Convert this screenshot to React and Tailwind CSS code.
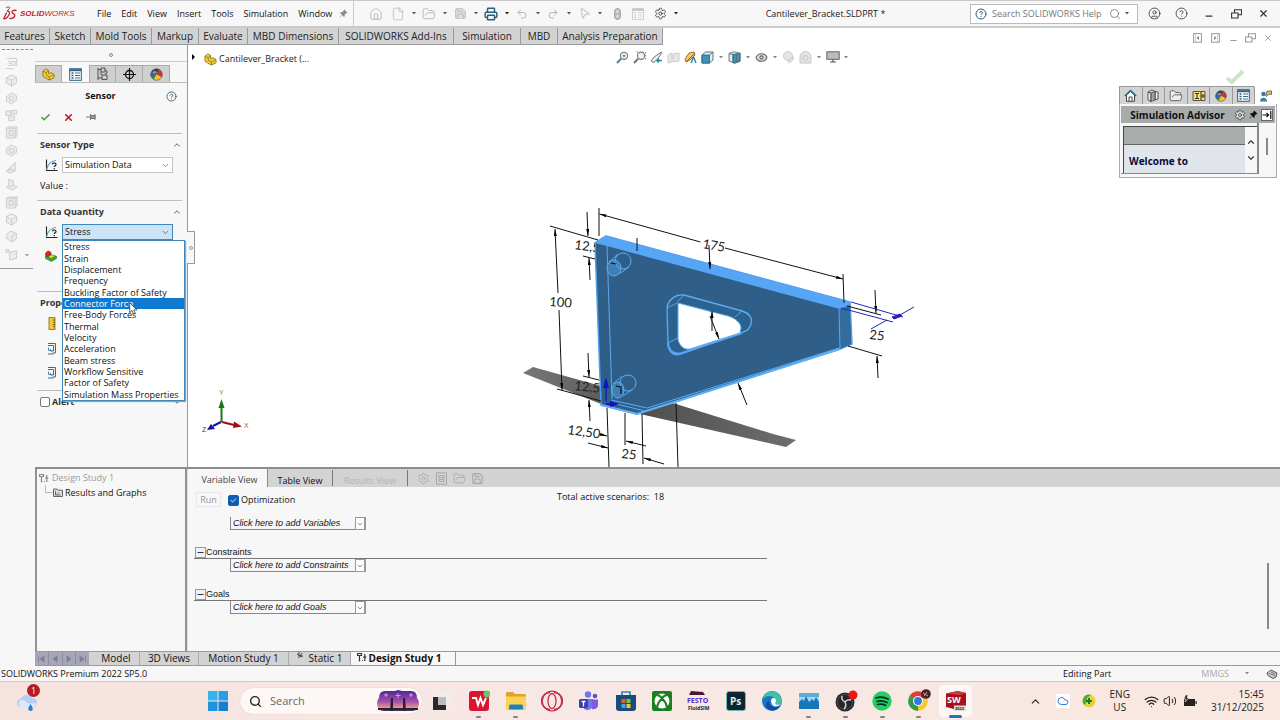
import React, { useState } from "react";
import {
  Check,
  ChevronDown,
  ChevronUp,
  CircleHelp,
  CircleUser,
  Cloud,
  Eye,
  File,
  FolderOpen,
  House,
  Minus,
  MousePointer2,
  Printer,
  Redo2,
  Save,
  Search,
  Settings,
  Undo2,
  Volume2,
  Wifi,
  X,
} from "lucide-react";

const menus = ["File", "Edit", "View", "Insert", "Tools", "Simulation", "Window"];

const ribbonTabs = [
  { label: "Features", width: "w-[50px]" },
  { label: "Sketch", width: "w-[41px]" },
  { label: "Mold Tools", width: "w-[61px]" },
  { label: "Markup", width: "w-[47px]" },
  { label: "Evaluate", width: "w-[49px]" },
  { label: "MBD Dimensions", width: "w-[91px]" },
  { label: "SOLIDWORKS Add-Ins", width: "w-[115px]" },
  { label: "Simulation", width: "w-[67px]" },
  { label: "MBD", width: "w-[37px]" },
  { label: "Analysis Preparation", width: "w-[105px]" },
];

const quantities = [
  "Stress",
  "Strain",
  "Displacement",
  "Frequency",
  "Buckling Factor of Safety",
  "Connector Force",
  "Free-Body Forces",
  "Thermal",
  "Velocity",
  "Acceleration",
  "Beam stress",
  "Workflow Sensitive",
  "Factor of Safety",
  "Simulation Mass Properties",
];

function Caret({ className = "w-[15px]", color = "#555" }) {
  return (
    <span className={`flex justify-center shrink-0 ${className}`}>
      <svg width="4" height="3" viewBox="0 0 4 3">
        <path d="M0 0h4L2 2.6z" fill={color} />
      </svg>
    </span>
  );
}

/* ---------- small drawings ---------- */

function PartIcon({ size = 13 }) {
  return (
    <svg width={size} height={size} viewBox="0 0 14 14">
      <path d="M1 3.5 4 1l3 1.5V6l3-1 3 2v3.5L8 13 1 9z" fill="#f3cf3c" stroke="#8a6d12" strokeWidth=".9" strokeLinejoin="round" />
      <path d="M1 3.5 4.5 5v3L8 9.5V13M4.5 5 7 3M8 9.5 13 7" fill="none" stroke="#8a6d12" strokeWidth=".8" />
    </svg>
  );
}

function ListIcon({ color = "#2a5f7e", size = 13 }) {
  return (
    <svg width={size} height={size} viewBox="0 0 13 13">
      <rect x=".7" y=".7" width="11.6" height="11.6" fill="#fff" stroke={color} />
      <path d="M.7 2.2h11.6" stroke={color} strokeWidth="2" />
      <path d="M2.5 5h2M2.5 7.5h2M2.5 10h2" stroke={color} strokeWidth="1.5" />
      <path d="M6 5h5M6 7.5h5M6 10h5" stroke={color} strokeWidth=".9" />
    </svg>
  );
}

function ConfigIcon() {
  return (
    <svg width="13" height="14" viewBox="0 0 13 14" fill="none" stroke="#444" strokeWidth=".9">
      <path d="M2 1v12M2 2.5h3M2 11h4M5 1h4v4H5zM6 8h5v4.5H6zM9 2.5l2 1.5v2L9 7M5 5v3" />
    </svg>
  );
}

function TargetIcon() {
  return (
    <svg width="13" height="13" viewBox="0 0 13 13" fill="none" stroke="#111">
      <circle cx="6.5" cy="6.5" r="4" strokeWidth="1.3" />
      <path d="M6.5 0v13M0 6.5h13" strokeWidth="1.1" />
    </svg>
  );
}

function BallIcon({ size = 14 }) {
  return (
    <svg width={size} height={size} viewBox="0 0 14 14">
      <path d="M7 7 1.5 4A6.3 6.3 0 0 1 10 1.5z" fill="#333a44" />
      <path d="M7 7 10 1.5A6.3 6.3 0 0 1 12.5 10z" fill="#d52c2c" />
      <path d="M7 7l5.5 3A6.3 6.3 0 0 1 4 12.5z" fill="#efc52a" />
      <path d="M7 7 4 12.5A6.3 6.3 0 0 1 1.5 4z" fill="#2f8b4a" />
      <path d="M7 7 1.5 4A6.3 6.3 0 0 0 1 9z" fill="#2b62c4" />
      <circle cx="7" cy="7" r="6.2" fill="none" stroke="#555" strokeWidth=".7" />
      <ellipse cx="5.2" cy="4.5" rx="2.2" ry="1.4" fill="#fff" opacity=".45" />
    </svg>
  );
}

function SensorIcon() {
  return (
    <svg width="13" height="13" viewBox="0 0 13 13" fill="none">
      <path d="M1.5.5v11h11" stroke="#222" strokeWidth="1.1" />
      <path d="M1.5 11C2.5 5 6 2 11 1.5" stroke="#4fa3c7" strokeWidth="1.1" />
      <path d="M7.5 5.4C7.6 3.4 11 3.6 11 5.4c0 1.3-1.7 1.3-1.7 2.6M9.3 9v1.2" stroke="#222" strokeWidth="1.2" />
    </svg>
  );
}

function StressIcon() {
  return (
    <svg width="12" height="12" viewBox="0 0 12 12">
      <path d="M.5 3 3 .8l3 1.400L6 6 3.600 8 .5 6.500z" fill="#d9261c" stroke="#7a1a12" strokeWidth=".4" />
      <path d="M3.600 6.500 6 4.500l5.500 1.700v2.300l-5 3L.5 8.500v-2z" fill="#35a83c" stroke="#1b5a20" strokeWidth=".5" />
      <path d="M3.600 6.600 7 5l2.500 1L6.200 8z" fill="#f4d429" />
    </svg>
  );
}

function RulerIcon() {
  return (
    <svg width="8" height="13" viewBox="0 0 8 13">
      <rect x="1" y=".6" width="6" height="11.8" fill="#f2cb36" stroke="#94741a" strokeWidth=".9" />
      <path d="M7 3H4.5M7 5.2H5M7 7.4H4.5M7 9.6H5" stroke="#5d480d" strokeWidth=".8" />
    </svg>
  );
}

function ScopeIcon() {
  return (
    <svg width="10" height="13" viewBox="0 0 10 13" fill="none" stroke="#56616b" strokeWidth="1">
      <path d="M1 1.500h7.500v9.500H5.500M1 12h5.500M1 3.500h5.500V9H3.500" />
      <path d="M1.500 5.500v3h3M3 7l1.500 1.500" stroke="#3b8db5" />
    </svg>
  );
}

function PushPin({ color = "#888" }) {
  return (
    <svg width="9" height="9" viewBox="0 0 9 9">
      <path d="M5.2.5 8.5 3.8l-1 .5-.4-.1L5.6 5.7l.1 1.6-.8.7L3 6 .8 8.4l-.3-.3L2.9 5.8.9 3.9l.7-.7 1.6.1L4.7 1.8l-.1-.5z" fill={color} />
    </svg>
  );
}

function FaintSolid({ kind }) {
  return (
    <svg width="13" height="13" viewBox="0 0 14 14" fill="#ebebeb" stroke="#cacaca" strokeWidth="1" strokeLinejoin="round">
      {kind === "3d" && (
        <>
          <path d="M2 1.5h10.5v8M1 12.5h8" fill="none" />
          <text x="3" y="10" fontSize="7" fill="#b9b9b9" stroke="none">3D</text>
        </>
      )}
      {kind === "cube" && <path d="M7 1l5.5 2.5v6L7 13l-5.5-3v-6zM1.5 4 7 6.5 12.5 3.5M7 6.5V13" />}
      {kind === "round" && <path d="M1.5 5 7 1l5.5 3v5L7 13 1.5 10zM4.5 5.5c2-2 5 0 5 2s-3 3-4.5 1.5z" />}
      {kind === "stack" && <path d="M1 2h5v5H1zM7.5 1.5h5v4h-5zM4 7.5h6v5H4z" />}
      {kind === "wedge" && <path d="M1.5 11 11 1.5v9L5 13zM1.5 11l4-2 5.5 1.5M5.5 9V7" />}
      {kind === "base" && <path d="M4 1.5 9 3v5l4 1.5L8.5 13 1.5 10 4 8.5zM9 8 4.5 9" />}
      {kind === "shell" && <path d="M1.5 2.5 4 1h9v9.5L10.5 13h-9zM4.5 5h4v5h-4zM1.5 2.5H11V13" />}
      {kind === "fillet" && <path d="M1.5 9c0-5 2-7.5 6-7.5L12.5 4v5.5L7.5 13zM7.5 13V7.5C8 5.5 10 4 12.5 4" />}
      {kind === "plane" && <path d="M5 4.5 12.5 3v8L5 13zM1 1.5h3v3H1z" />}
    </svg>
  );
}

const stripTools = ["3d", "cube", "round", "stack", "shell", "round", "wedge", "base", "shell", "cube", "fillet", "plane"];

/* ---------- title bar ---------- */

function TitleBar() {
  const tool = "flex w-4 h-5 shrink-0 items-center justify-center";
  return (
    <header className="flex h-7 shrink-0 items-center border-t border-b-2 border-t-[#c9c9c9] border-b-[#cacaca] bg-[#f7f7f7]">
      <div className="flex w-[92px] shrink-0 items-center gap-[3px] pl-[3px] text-[#c8202f]">
        <svg width="14" height="15" viewBox="0 0 14 15" fill="none" stroke="#c8202f" strokeLinecap="round">
          <path d="M3.5 1.5c2-1 4-.5 3 1L4.5 4.5" strokeWidth="1" />
          <path d="M4.5 5C7.5 5.5 7 8.5 4.5 11 3 12.5 1.5 13 .8 12.5L3.5 7" strokeWidth="1.3" />
          <path d="M13 4.5C11.5 3.8 9 4.5 9 6c0 1.8 3.3 1.5 2.8 3.800C11.3 12 8.5 13 6.8 12.3" strokeWidth="1.4" />
        </svg>
        <span className="font-['Liberation_Sans'] text-[8px] leading-4 italic">
          <b>SOLID</b>WORKS
        </span>
      </div>
      <nav className="flex w-[242px] shrink-0 justify-between text-[9px] leading-4">
        {menus.map((m) => (
          <button key={m} className="px-[5px]">{m}</button>
        ))}
      </nav>
      <div className="flex h-full w-[20px] shrink-0 items-center justify-center border-r border-[#ccc]">
        <PushPin />
      </div>
      <div className="ml-[11px] flex shrink-0 items-center text-[#b5b5b5]">
        <button aria-label="Home" className="flex w-[22px] justify-center"><House size={14} strokeWidth={1.5} /></button>
        <span className="w-[3px]" />
        <button aria-label="New" className={tool}><File size={14} strokeWidth={1.3} /></button>
        <Caret />
        <button aria-label="Open" className={tool}><FolderOpen size={14} strokeWidth={1.5} /></button>
        <Caret />
        <button aria-label="Save" className={tool}><Save size={13} strokeWidth={1.5} fill="#ddd" /></button>
        <Caret />
        <button aria-label="Print" className={`${tool} text-[#27607f]`}><Printer size={14} strokeWidth={2.5} /></button>
        <Caret color="#222" />
        <button aria-label="Undo" className={tool}><Undo2 size={12} strokeWidth={2} /></button>
        <Caret />
        <button aria-label="Redo" className={tool}><Redo2 size={12} strokeWidth={2} /></button>
        <Caret />
        <button aria-label="Select" className={tool}><MousePointer2 size={13} strokeWidth={1.5} className="rotate-[12deg]" /></button>
        <Caret />
        <button aria-label="Rebuild" className="flex w-5 justify-center">
          <svg width="7" height="12" viewBox="0 0 7 12">
            <rect x=".5" y=".5" width="6" height="11" rx="3" fill="#b9b9b9" stroke="#a5a5a5" />
            <circle cx="3.5" cy="3.5" r="1.5" fill="#ddd" /><circle cx="3.5" cy="8.3" r="1.5" fill="#ddd" />
          </svg>
        </button>
        <button aria-label="Options list" className="flex w-[22px] justify-center"><ListIcon color="#c4c4c4" size={12} /></button>
        <button aria-label="Options" className="flex w-[22px] justify-center text-[#333]"><Settings size={13} strokeWidth={1.5} /></button>
        <Caret className="w-[10px]" color="#222" />
      </div>
      <div className="min-w-0 flex-1 text-center text-[9px] leading-4 text-[#222]">Cantilever_Bracket.SLDPRT *</div>
      <div className="flex h-5 w-[168px] shrink-0 items-center border border-[#bbb] bg-white px-1">
        <CircleHelp size={12} strokeWidth={2} className="text-[#2f5d78]" />
        <input aria-label="Search help" placeholder="Search SOLIDWORKS Help" className="ml-[5px] w-0 flex-1 text-[9px] outline-none placeholder:text-[#777]" />
        <Search size={12} strokeWidth={1.5} className="text-[#666]" />
        <Caret className="w-3" />
      </div>
      <div className="flex shrink-0 items-center pl-[3px] text-[#333]">
        <button aria-label="Account" className="flex w-[27px] justify-center"><CircleUser size={13} strokeWidth={1.5} /></button>
        <button aria-label="Help" className="flex w-[27px] justify-center"><CircleHelp size={13} strokeWidth={1.5} /></button>
        <button aria-label="Minimize" className="flex w-[28px] justify-center pt-1"><Minus size={10} strokeWidth={3} /></button>
        <button aria-label="Restore" className="flex w-[27px] justify-center"><Restore color="#333" /></button>
        <button aria-label="Close" className="flex w-[27px] justify-center"><X size={11} strokeWidth={2.5} /></button>
        <span className="w-[3px]" />
      </div>
    </header>
  );
}

function Restore({ color }) {
  return (
    <svg width="11" height="10" viewBox="0 0 11 10" fill="none" stroke={color} strokeWidth="1.1">
      <path d="M.6 4h6.400v5H.6zM3.5 4V.8h7v5H7" />
    </svg>
  );
}

function DockIcon({ flip }) {
  return (
    <svg width="9" height="10" viewBox="0 0 9 10" className={flip ? "-scale-x-100" : ""}>
      <rect x=".6" y=".6" width="7.8" height="8.6" fill="none" stroke="#999" />
      <path d="M2.5.6v8.6" stroke="#bbb" strokeWidth=".6" />
      <path d="M6 3v4L3.5 5z" fill="#888" />
    </svg>
  );
}

function Ribbon() {
  return (
    <div className="flex h-[17px] shrink-0 bg-white">
      {ribbonTabs.map((t) => (
        <button
          key={t.label}
          className={`${t.width} shrink-0 border-r border-b border-[#9a9a9a] bg-[#d3d3d3] text-center text-[10px] leading-4 whitespace-nowrap text-[#222]`}
        >
          {t.label}
        </button>
      ))}
      <div className="ml-auto flex items-end pr-1 text-[#999]">
        <button aria-label="Dock left" className="flex w-[17px] justify-center pb-[2px]"><DockIcon /></button>
        <button aria-label="Dock right" className="flex w-[18px] justify-center pb-[2px]"><DockIcon flip /></button>
        <button aria-label="Minimize document" className="flex w-[18px] justify-center"><Minus size={9} strokeWidth={3} /></button>
        <button aria-label="Restore document" className="flex w-[17px] justify-center pb-[2px]"><Restore color="#999" /></button>
        <button aria-label="Close document" className="flex w-[17px] justify-center pb-[2px]"><X size={10} strokeWidth={2} /></button>
      </div>
    </div>
  );
}

/* ---------- left side ---------- */

function ToolStrip() {
  return (
    <div className="w-[35px] shrink-0 pt-1">
      <div className="ml-[2px] w-[31px] border-t border-dashed border-[#888]" />
      <div className="mt-[5px] grid h-[208px] w-[22px] auto-rows-fr place-items-center">
        {stripTools.map((kind, i) => (
          <button key={i} aria-label={`Feature tool ${i + 1}`} className="relative">
            <FaintSolid kind={kind} />
            {kind === "plane" && (
              <span className="absolute top-1.5 left-4"><Caret className="w-3" color="#999" /></span>
            )}
          </button>
        ))}
      </div>
      <div className="mt-[5px] w-[33px] border-t border-[#999]" />
    </div>
  );
}

function GroupHeader({ children }) {
  return (
    <div className="ml-[2px] flex h-[23px] items-center justify-between border-t border-[#bdbdbd] pl-[3px]">
      <h2 className="text-[9px] leading-4 font-bold text-[#333]">{children}</h2>
      <ChevronUp size={10} strokeWidth={2} className="text-[#444]" />
    </div>
  );
}

function PropertyPanel() {
  const [quantity, setQuantity] = useState("Stress");
  const [alert, setAlert] = useState(false);
  const tab = "flex h-[17px] w-[27px] items-center justify-center border border-b-0 border-[#aaa]";

  return (
    <section className="relative flex w-[153px] shrink-0 flex-col border-r border-[#999] bg-[#f7f7f7]">
      <div className="flex h-[17px] items-center justify-center border-b border-[#ccc] pt-1">
        <span className="size-1 rounded-full border border-[#888]" />
      </div>
      <div className="mt-[3px] flex border-b border-[#bbb]">
        <button aria-label="Feature tree" className={`${tab} bg-[#cfcfcf]`}><PartIcon /></button>
        <button aria-label="Property manager" className={`${tab} border-transparent bg-[#f9f9f9]`}><ListIcon /></button>
        <button aria-label="Configurations" className={`${tab} bg-[#cfcfcf]`}><ConfigIcon /></button>
        <button aria-label="DimXpert" className={`${tab} border-l-0 bg-[#cfcfcf]`}><TargetIcon /></button>
        <button aria-label="Appearances" className={`${tab} border-l-0 bg-[#cfcfcf]`}><BallIcon size={13} /></button>
      </div>

      <div className="mt-[5px] flex h-4 items-center pr-2.5">
        <h1 className="flex-1 text-center text-[9px] leading-4 font-bold">Sensor</h1>
        <CircleHelp size={11} strokeWidth={2} className="text-[#3d6478]" />
      </div>
      <div className="mt-[5px] mb-2 flex h-4 items-center gap-3 pl-[5px]">
        <button aria-label="OK"><Check size={11} strokeWidth={3.5} className="text-[#3fa535]" /></button>
        <button aria-label="Cancel"><X size={11} strokeWidth={3.5} className="text-[#b3202a]" /></button>
        <button aria-label="Keep visible">
          <svg width="10" height="8" viewBox="0 0 10 8" fill="none" stroke="#777">
            <path d="M0 4h4M4.500 1v6M9 1v6" />
            <path d="M4.500 2.500h4.500v3H4.500z" fill="#999" />
          </svg>
        </button>
      </div>

      <div className="flex flex-1 flex-col pr-[5px]">
        <GroupHeader>Sensor Type</GroupHeader>
        <div className="flex h-[18px] items-center pl-[10px]">
          <SensorIcon />
          <div className="relative ml-1 w-[111px]">
            <select aria-label="Sensor type" className="block h-4 w-full appearance-none border border-[#c4c4c4] bg-white pl-[2px] text-[9px] leading-3">
              <option>Simulation Data</option>
            </select>
            <ChevronDown size={9} strokeWidth={2} className="pointer-events-none absolute top-1 right-[3px] text-[#666]" />
          </div>
        </div>
        <p className="mt-1 mb-[6px] pl-[5px] text-[9px] leading-4">Value :</p>

        <GroupHeader>Data Quantity</GroupHeader>
        <div className="flex h-[18px] items-center pl-[10px]">
          <SensorIcon />
          <div className="relative ml-1 w-[111px]">
            <select
              aria-label="Data quantity"
              value={quantity}
              onChange={(e) => setQuantity(e.target.value)}
              className="block h-4 w-full appearance-none border border-[#3f87bd] bg-[#cde4f7] pl-[2px] text-[9px] leading-3"
            >
              {quantities.map((q) => (
                <option key={q}>{q}</option>
              ))}
            </select>
            <ChevronDown size={9} strokeWidth={2} className="pointer-events-none absolute top-1 right-[3px] text-[#555]" />
            <ul role="listbox" aria-label="Data quantities" className="absolute top-4 left-0 z-20 flex h-[161px] w-[123px] flex-col border border-[#3f87bd] bg-white shadow-[1px_1px_1px_#8aa]">
              {quantities.map((q) => (
                <li
                  key={q}
                  role="option"
                  aria-selected={q === "Connector Force"}
                  onClick={() => setQuantity(q)}
                  className={`flex flex-1 items-center pl-[1px] text-[9px] leading-[11px] whitespace-nowrap ${
                    q === "Connector Force" ? "bg-[#0f78cf] text-white" : ""
                  }`}
                >
                  {q}
                </li>
              ))}
              <svg width="9" height="13" viewBox="0 0 9 13" className="absolute top-[61px] left-[66px]">
                <path d="M.7.7v10l2.3-2.2 1.6 3.7 1.7-.7-1.6-3.6h3.2z" fill="#fff" stroke="#333" strokeWidth=".8" />
              </svg>
            </ul>
          </div>
        </div>
        <div className="mt-[9px] mb-[29px] pl-[10px]"><StressIcon /></div>

        <GroupHeader>Properties</GroupHeader>
        <div className="flex h-[76px] flex-col items-center justify-between pt-[3px] pr-[115px] pb-[11px] pl-[1px]">
          <RulerIcon />
          <ScopeIcon />
          <ScopeIcon />
        </div>
        <div className="ml-[2px] flex h-[23px] items-center border-t border-[#bdbdbd] pl-[3px]">
          <label className="flex flex-1 items-center gap-[2px] text-[9px] leading-4 font-bold text-[#333]">
            <input
              type="checkbox"
              checked={alert}
              onChange={(e) => setAlert(e.target.checked)}
              className="size-[10px] appearance-none rounded-[2px] border border-[#777] bg-white checked:bg-[#0f5fae]"
            />
            Alert
          </label>
          <ChevronDown size={10} strokeWidth={2} className="text-[#444]" />
        </div>
      </div>

      {/* fly-out handle */}
      <div className="absolute top-[186px] left-[152px] z-10 flex h-[33px] w-2 items-center justify-center border border-l-0 border-[#999] bg-[#f7f7f7]">
        <span className="size-1 rounded-full border border-[#999]" />
      </div>
    </section>
  );
}

/* ---------- graphics area ---------- */

function Bracket() {
  return (
    <svg className="absolute inset-0 h-full w-full" viewBox="188 45 1092 422" preserveAspectRatio="xMinYMin slice">
      <defs>
        <linearGradient id="shadow" x1="0" y1="0" x2="1" y2="0">
          <stop offset="0" stopColor="#777" />
          <stop offset=".45" stopColor="#505050" />
          <stop offset="1" stopColor="#6e6e6e" />
        </linearGradient>
        <marker id="arrow" viewBox="0 0 7 3" refX="7" refY="1.5" markerWidth="7" markerHeight="3" markerUnits="userSpaceOnUse" orient="auto-start-reverse">
          <path d="M0 0l7 1.5L0 3z" />
        </marker>
      </defs>

      <path d="M523 373l10-6 68 19 75 18 97 30 23 6-10 7-146-33-39-10z" fill="url(#shadow)" />

      {/* solid body */}
      <path d="M595 243l11-7 244 66 2 42-12 5-203 65-36-9z" fill="#2f5f89" stroke="#4d9eea" strokeWidth="1.5" strokeLinejoin="round" />
      <path d="M595 243l11-7 244 66-1 5-9 2-233-63z" fill="#57a5f5" />
      <path d="M840 309l10-4 1 39-11 5z" fill="#336d9f" />
      <path d="M607 246l5 153M839 309l1 39M611 400l36 8 192-60M612 403l33 8" fill="none" stroke="#5dabf0" strokeWidth="1" />
      <path d="M601 405l36 9 203-65" fill="none" stroke="#5fb0f7" strokeWidth="2" />

      {/* triangular cut-out */}
      <path d="M667 308c1-8 8-14 17-13l58 16c7 2 11 7 9 13-1 4-4 7-8 8l-62 22c-8 3-13-3-13-10z" fill="#2c628f" stroke="#5dabf0" strokeWidth="1.3" />
      <path d="M668 343c1 9 7 12 14 10l60-20" fill="none" stroke="#57a5f5" strokeWidth="2" />
      <path d="M678 303l50 13c7 2 13 7 13 12l-1 5-50 16c-7 1-11-4-12-10z" fill="#fff" stroke="#5dabf0" strokeWidth="1" />
      <path d="M667 308l10-5M684 295l-7 7M735 317l7-6M668 343l10-5" stroke="#5dabf0" strokeWidth=".9" />

      {/* bolt holes */}
      <g fill="none" stroke="#5dabf0" strokeWidth="1">
        <ellipse cx="614" cy="268" rx="7" ry="8" fill="#3f7fb5" />
        <ellipse cx="623" cy="261" rx="8" ry="8" />
        <path d="M609 262l9-8M619 274l10-7" />
        <ellipse cx="618" cy="390" rx="6" ry="8" fill="#3f7fb5" />
        <ellipse cx="628" cy="383" rx="8" ry="8" />
        <path d="M613 384l9-8M623 396l10-7" />
      </g>
      <path d="M611 263l5 1M616 386l5 1v7" stroke="#111" strokeWidth="1.2" fill="none" />

      {/* dimensions */}
      <g fill="none" stroke="#111" strokeWidth="1">
        <path d="M599 208v28M843 274l1 29M550 226l48 14" />
        <path d="M599.500 214l101 28" markerStart="url(#arrow)" />
        <path d="M725 248l118 31" markerEnd="url(#arrow)" />
        <path d="M555 229l3 64" markerStart="url(#arrow)" />
        <path d="M559 310l3 80" markerEnd="url(#arrow)" />
        <path d="M557 389l44 12" />
        <path d="M587 212l1 24" markerEnd="url(#arrow)" />
        <path d="M590 280l-1-22" markerEnd="url(#arrow)" />
        <path d="M583 256l12 3M583 376l16 4" />
        <path d="M588 353l1 24" markerEnd="url(#arrow)" />
        <path d="M590 421l-1-21" markerEnd="url(#arrow)" />
        <path d="M637 238v13" />
        <path d="M709 245l1 24" markerEnd="url(#arrow)" />
        <path d="M712 311v20" markerStart="url(#arrow)" />
        <path d="M710 316l9 23" markerEnd="url(#arrow)" />
        <path d="M747 405l-9-22" markerEnd="url(#arrow)" />
        <path d="M607 408l2 59M625 413v32M642 414l1 50M676 403l2 64" />
        <path d="M599 434l8 2" markerEnd="url(#arrow)" />
        <path d="M588 443l20 5" markerEnd="url(#arrow)" />
        <path d="M646 446l-20-5" markerEnd="url(#arrow)" />
        <path d="M664 464l-20-6" markerEnd="url(#arrow)" />
        <path d="M875 290l1 23" markerEnd="url(#arrow)" />
        <path d="M878 378l-1-22" markerEnd="url(#arrow)" />
        <path d="M847 306l34 9M848 346l34 10" />
      </g>
      <g fill="none" stroke="#2a22b8" strokeWidth="1">
        <path d="M851 302l52 15M841 308l52 14M914 307l-16 9M871 329l16-9" />
        <path d="M892 317l8-3 2 2-8 3z" fill="#2a22b8" />
        <path d="M606 401v-18M606 404h11" stroke="#1010c8" strokeWidth="1.3" />
      </g>
      <path d="M603 388l3-11 3 11zM610 401l9 3-9 3z" fill="#1010c8" />
      <g className="font-['Lato',sans-serif] text-[13px]" fill="#222">
        <text x="549" y="306" transform="rotate(4 549 306)">100</text>
        <text x="702" y="248" transform="rotate(10 702 248)">175</text>
        <svg x="570" y="235" width="25" height="30" viewBox="570 235 25 30">
          <text x="574" y="249" transform="rotate(8 574 249)">12,50</text>
        </svg>
        <svg x="570" y="374" width="30" height="30" viewBox="570 374 30 30">
          <text x="574" y="390" transform="rotate(6 574 390)">12,50</text>
        </svg>
        <text x="567" y="434" transform="rotate(8 567 434)">12,50</text>
        <text x="621" y="458" transform="rotate(6 621 458)">25</text>
        <text x="869" y="339" transform="rotate(6 869 339)">25</text>
      </g>

      {/* orientation triad */}
      <path d="M221.500 422v-15" stroke="#157a15" strokeWidth="2" />
      <path d="M218.500 408l3-9 3 9z" fill="#157a15" />
      <path d="M222 422l12 3" stroke="#a01010" strokeWidth="2" />
      <path d="M234 421.500l8 5-9 1.500z" fill="#a01010" />
      <path d="M221 422l-8 4" stroke="#12129c" strokeWidth="2" />
      <path d="M207 430l4-6 4 5z" fill="#12129c" />
      <g className="font-['Liberation_Sans',sans-serif] text-[7px]">
        <text x="219" y="395" fill="#5aa05a">Y</text>
        <text x="244" y="428" fill="#c05050">X</text>
        <text x="202" y="432" fill="#3030b0">Z</text>
      </g>
    </svg>
  );
}

function ViewTool({ label, children }) {
  return (
    <button aria-label={label} className="flex w-[17px] justify-center">
      {children}
    </button>
  );
}

function Lens({ area }) {
  return (
    <svg width="13" height="13" viewBox="0 0 13 13" fill="none">
      {area && <path d="M3.5 1h9v9" stroke="#888" strokeDasharray="1.5 1.5" />}
      <circle cx="8" cy="4.8" r="3.6" fill="#f2f2f2" stroke="#777" strokeWidth="1.1" />
      <path d="M5 7.8 1 12" stroke="#5a7f95" strokeWidth="2" />
      {!area && <path d="M6.5 4.8h3M8 3.3v3" stroke="#777" />}
    </svg>
  );
}

function CubeIcon({ section }) {
  if (section) {
    return (
      <svg width="13" height="13" viewBox="0 0 13 13" strokeWidth=".9" strokeLinejoin="round">
        <path d="M1 2.500 6 .8l6 1.400v8L7 12.300 1 10z" fill="#e3eaee" stroke="#5b6d78" />
        <path d="M5 3.500l7-1.300v8L5 12z" fill="#3d93b8" stroke="#2f6680" />
        <path d="M1 2.500 5 3.500V12M8.500 3v8.500" fill="none" stroke="#5b6d78" />
      </svg>
    );
  }
  return (
    <svg width="13" height="13" viewBox="0 0 13 13" strokeWidth=".9" strokeLinejoin="round">
      <path d="M1 4l3.500-3H12v8l-3.500 3H1z" fill="#e8eef1" stroke="#48606e" />
      <path d="M1 4h7.500v8H1z" fill="#3d93b8" stroke="#2f6680" />
      <path d="M8.500 4 12 1" stroke="#48606e" />
    </svg>
  );
}

function HeadsUpBar() {
  const caret = <Caret className="w-[10px]" color="#888" />;
  return (
    <div className="flex h-4 items-center">
      <ViewTool label="Zoom to fit"><Lens /></ViewTool>
      <ViewTool label="Zoom to area"><Lens area /></ViewTool>
      <ViewTool label="Previous view">
        <svg width="13" height="13" viewBox="0 0 13 13" fill="none">
          <path d="M11.5 1 4 6l-3 4 2 1.5L7 9l4-6z" fill="#eee" stroke="#777" />
          <path d="M12 9.5H7M8.8 7.5 6.8 9.5l2 2" stroke="#2c83a8" strokeWidth="1.4" />
        </svg>
      </ViewTool>
      <ViewTool label="Section view">
        <svg width="13" height="13" viewBox="0 0 13 13" fill="#e7e7e7" stroke="#ccc">
          <path d="M1 4l4-2v9l-4 1zM6 3l6-1v8l-6 1z" />
        </svg>
      </ViewTool>
      <ViewTool label="Dynamic annotation">
        <svg width="13" height="13" viewBox="0 0 13 13" fill="none">
          <path d="M1 8 5 2l5-1 1 3-5 5-4 2z" fill="#f2c765" stroke="#8d6a33" strokeWidth=".9" />
          <path d="M2 11 11 2" stroke="#666" />
          <path d="M7 12l2.5-6L12 12" stroke="#2c83a8" strokeWidth="1.4" />
        </svg>
      </ViewTool>
      <ViewTool label="View orientation"><CubeIcon /></ViewTool>
      {caret}
      <ViewTool label="Display style"><CubeIcon section /></ViewTool>
      {caret}
      <ViewTool label="Hide/show items"><Eye size={13} strokeWidth={2} className="text-[#666]" fill="#ddd" /></ViewTool>
      {caret}
      <ViewTool label="Edit appearance">
        <svg width="13" height="13" viewBox="0 0 13 13" fill="#e5e5e5" stroke="#ccc">
          <circle cx="6" cy="5" r="4.5" /><path d="M6 12l2-4 4-2-2 4z" />
        </svg>
      </ViewTool>
      <ViewTool label="Apply scene">
        <svg width="13" height="13" viewBox="0 0 13 13" fill="#e3e3e3" stroke="#c8c8c8">
          <path d="M1 12V6a5.5 5.5 0 0 1 11 0v6z" /><circle cx="6.5" cy="7" r="2.5" />
        </svg>
      </ViewTool>
      {caret}
      <ViewTool label="View settings">
        <svg width="14" height="12" viewBox="0 0 14 12">
          <rect x=".8" y=".8" width="12.4" height="7.5" fill="#bbb" stroke="#666" />
          <path d="M7 8.5v2M4 11h6" stroke="#555" strokeWidth="1.2" />
        </svg>
      </ViewTool>
      {caret}
    </div>
  );
}

function TaskPane() {
  const tab = "flex h-[18px] flex-1 items-center justify-center border-t border-l border-[#999]";
  return (
    <aside className="mt-[25px] mr-[3px] w-[158px] shrink-0">
      <div className="flex h-4 justify-end pr-[32px]">
        <svg width="20" height="16" viewBox="0 0 20 16">
          <path d="M2 8l5 4L18 1" fill="none" stroke="#cbe6c6" strokeWidth="4" />
        </svg>
      </div>
      <div className="flex">
        <button aria-label="Resources" className={`${tab} bg-[#d3d3d3]`}>
          <svg width="13" height="13" viewBox="0 0 13 13">
            <path d="M2.5 6v6.3h8V6L6.5 2.5z" fill="#fff" stroke="#444" />
            <path d="M.8 7 6.5 1.5 12.2 7" fill="none" stroke="#2b6e8c" strokeWidth="1.5" />
            <path d="M5 12V8h3v4" fill="none" stroke="#444" />
          </svg>
        </button>
        <button aria-label="Design library" className={`${tab} bg-[#d3d3d3]`}>
          <svg width="12" height="13" viewBox="0 0 12 13" fill="#eee" stroke="#444" strokeWidth=".9">
            <path d="M1 3l3 1v8.5L1 11zM4 4l4-1.5v8.5L4 12.5zM8 2.5 11 3v7L8 11zM1 3l4-2 3 1.5M6 3.5V11" />
          </svg>
        </button>
        <button aria-label="File explorer" className={`${tab} bg-[#d3d3d3] text-[#555]`}><FolderOpen size={14} strokeWidth={1.5} fill="#eee" /></button>
        <button aria-label="View palette" className={`${tab} bg-[#d3d3d3]`}>
          <svg width="14" height="12" viewBox="0 0 14 12">
            <path d="M1 1.5h12v9H1z" fill="#f1dc77" stroke="#555" />
            <path d="M3 3.5h4M5 3.5v5M3 8.5h4M9 2v8M9 6h4M11 4v4" fill="none" stroke="#3d3d2a" strokeWidth="1.1" />
          </svg>
        </button>
        <button aria-label="Appearances and scenes" className={`${tab} bg-[#d3d3d3]`}><BallIcon size={12} /></button>
        <button aria-label="Custom properties" className={`${tab} bg-[#d3d3d3]`}><ListIcon /></button>
        <button aria-label="Simulation advisor" className={`${tab} border-t-transparent bg-white`}>
          <svg width="14" height="13" viewBox="0 0 14 13">
            <circle cx="4.5" cy="5" r="2.3" fill="#3a7d9e" />
            <path d="M1 12.5c0-5 7-5 7 0z" fill="#3a7d9e" />
            <path d="M8 2h4.5v3.5L10 5 7.5 7.5 7 6.5z" fill="#e8c54a" stroke="#555" strokeWidth=".8" />
          </svg>
        </button>
      </div>
      <div className="border border-t-0 border-[#aaa] bg-[#f7f7f7] p-[1px] pt-[2px]">
        <div className="flex h-[17px] items-center bg-[#a8abab] pr-[2px]">
          <h2 className="flex-1 text-center text-[10px] leading-4 font-bold whitespace-nowrap">Simulation Advisor</h2>
          <button aria-label="Pane options"><Settings size={12} strokeWidth={1.5} fill="#ddd" className="text-[#333]" /></button>
          <button aria-label="Pin pane" className="mx-[3px]"><PushPin color="#111" /></button>
          <button aria-label="Collapse pane" className="flex size-3 items-center border border-[#666] bg-white">
            <svg width="10" height="10" viewBox="0 0 10 10" fill="none" stroke="#111" strokeWidth="1.2">
              <path d="M.5 5h6M4.5 3l2 2-2 2M8.8 1v8" />
            </svg>
          </button>
        </div>
        <div className="flex h-[53px] pb-[2px]">
          <div className="flex flex-1 border-r-2 border-b border-[#888] pt-[3px] pl-[2px]">
            <div className="flex flex-1 flex-col border-t border-l border-[#444]">
              <div className="h-[18px] border-b border-[#666] bg-[#a8adac]" />
              <div className="flex flex-1 items-center bg-[#e0e5eb] pt-1 pl-[5px]">
                <span className="text-[10px] leading-4 font-bold text-[#0b0b3a]">Welcome to</span>
              </div>
            </div>
            <div className="flex w-3 flex-col items-center justify-center gap-[6px] border-t border-[#444] text-[#444]">
              <ChevronUp size={10} strokeWidth={3} />
              <ChevronDown size={10} strokeWidth={3} />
            </div>
          </div>
          <div className="flex w-4 items-center justify-center">
            <span className="mb-1 h-[17px] w-[2px] bg-[#888]" />
          </div>
        </div>
      </div>
    </aside>
  );
}

function Viewport() {
  return (
    <main className="relative flex min-w-0 flex-1 items-start overflow-hidden bg-white">
      <Bracket />
      <div className="relative mt-1.5 flex w-[426px] shrink-0 items-center pl-1">
        <svg width="4" height="6" viewBox="0 0 4 6" className="mb-1"><path d="M0 0l3 3-3 3z" /></svg>
        <button className="ml-2 flex items-center gap-[2px] text-[9px] leading-4 text-[#222]">
          <PartIcon />
          Cantilever_Bracket (...
        </button>
      </div>
      <div className="relative mt-1"><HeadsUpBar /></div>
      <div className="relative ml-auto"><TaskPane /></div>
    </main>
  );
}

/* ---------- design study ---------- */

function StudyIcon({ color = "#555" }) {
  return (
    <svg width="10" height="10" viewBox="0 0 10 10" fill="none" stroke={color} strokeWidth="1.2">
      <path d="M.5 1.5h4v2h-4zM2.500 3.500v6M6 5h3.500M7.800 2v7M5 8.500h1" />
    </svg>
  );
}

function AddRow({ label }) {
  return (
    <div className="relative ml-[36px] h-[13px] w-[136px]">
      <select aria-label={label} className="block h-full w-full appearance-none border-b border-l border-[#888] pl-[2px] font-['Liberation_Sans',sans-serif] text-[9px] leading-3 italic">
        <option>{label}</option>
      </select>
      <span className="pointer-events-none absolute inset-y-0 right-0 flex w-[11px] items-center justify-center border border-r-2 border-[#999] bg-white">
        <ChevronDown size={8} strokeWidth={2} className="text-[#555]" />
      </span>
    </div>
  );
}

function StudySection({ title }) {
  return (
    <div className="flex h-[12px] w-[573px] items-center border-b border-[#777] pl-[1px] font-['Liberation_Sans',sans-serif] text-[9px] leading-[11px]">
      <button aria-label={`Collapse ${title}`} className="flex size-[11px] items-center justify-center border border-[#999] bg-[#f2f2f2] text-[#335]">
        <Minus size={9} strokeWidth={3} />
      </button>
      {title}
    </div>
  );
}

function DesignStudy() {
  const [optimize, setOptimize] = useState(true);
  return (
    <section className="flex h-[184px] shrink-0 border-t-2 border-[#8d8d8d]">
      <div className="w-[152px] shrink-0 border-r-2 border-l-2 border-[#8b9499] pt-[2px] pl-[2px] text-[9px]">
        <div className="flex h-[14px] items-center gap-[3px] text-[#999]">
          <StudyIcon color="#888" />
          Design Study 1
        </div>
        <div className="ml-[6px] flex h-[15px] items-center">
          <span className="mb-2 h-2 w-2 border-b border-l border-[#bbb]" />
          <svg width="10" height="9" viewBox="0 0 10 9" className="mr-[2px]">
            <path d="M.5 1h3.500l1 1.200h4.500v6.300h-9z" fill="#ddd" stroke="#666" />
            <path d="M2.5 3v4h5M4 6.5l2-2" fill="none" stroke="#555" strokeWidth=".8" />
          </svg>
          Results and Graphs
        </div>
      </div>
      <div className="relative flex min-w-0 flex-1 flex-col border-l border-[#ddd]">
        <div className="flex h-[18px] shrink-0 items-stretch bg-[#d3d3d3] text-[9px] leading-[18px]">
          <button className="w-[80px] border-r border-[#888] bg-[#f7f7f7] pt-[2px] pl-1 text-[#444]">Variable View</button>
          <button className="my-[1px] w-[65px] border-r border-[#777] pt-[2px]">Table View</button>
          <button disabled className="my-[1px] w-[75px] border-r border-[#777] pt-[2px] text-[#b5b5b5]">Results View</button>
          <div className="flex items-center gap-[5px] pl-[9px] text-[#a8a8a8]">
            <button aria-label="Study options"><Settings size={13} strokeWidth={1.5} /></button>
            <button aria-label="Study report">
              <svg width="13" height="13" viewBox="0 0 13 13" fill="none" stroke="#a8a8a8">
                <path d="M1.5.8h10v11.4h-10zM4 3.5h5v6H4zM4.5 5.5h4M4.5 7.5h4" />
              </svg>
            </button>
            <button aria-label="Open study"><FolderOpen size={13} strokeWidth={1.5} /></button>
            <button aria-label="Save study"><Save size={13} strokeWidth={2} /></button>
          </div>
        </div>
        <div className="mt-[5px] flex items-start pl-2">
          <button className="h-[15px] w-[25px] border border-[#e8e8e8] text-[9px] leading-3 text-[#999]">Run</button>
          <label className="ml-[7px] flex w-[80px] items-center gap-[2px] text-[9px] leading-4">
            <span className="relative flex">
              <input
                type="checkbox"
                checked={optimize}
                onChange={(e) => setOptimize(e.target.checked)}
                className="size-[11px] appearance-none rounded-[2px] border border-[#0f5fae] checked:bg-[#0f5fae]"
              />
              {optimize && <Check size={7} strokeWidth={3} className="pointer-events-none absolute top-[2px] left-[2px] text-white" />}
            </span>
            Optimization
          </label>
          <p className="ml-[249px] text-[9px] leading-[9px] whitespace-pre">Total active scenarios:  18</p>
        </div>
        <div className="mt-[9px] pl-[6px]">
          <AddRow label="Click here to add Variables" />
          <div className="mt-[17px]"><StudySection title="Constraints" /></div>
          <AddRow label="Click here to add Constraints" />
          <div className="mt-[17px]"><StudySection title="Goals" /></div>
          <AddRow label="Click here to add Goals" />
        </div>
        <div className="absolute right-[11px] bottom-[22px] h-[66px] w-[2px] bg-[#888]" />
      </div>
    </section>
  );
}

function BottomTabs() {
  const tab = "shrink-0 border-r border-[#aaa] bg-[#d3d3d3] text-center";
  return (
    <div className="flex h-[15px] shrink-0 border-t border-b border-[#999] text-[10px] leading-[13px]">
      <div className="flex w-[54px] shrink-0 divide-x divide-[#8d8da0] bg-[#a6a6b8]">
        {["M1.5 1v6M7 1v6L3 4z", "M6 1v6L2 4z", "M2 1v6l4-3z", "M6.5 1v6M1 1v6l4-3z"].map((d, i) => (
          <button key={i} aria-label={`Tab scroll ${i + 1}`} className="flex flex-1 items-center justify-center">
            <svg width="8" height="8" viewBox="0 0 8 8"><path d={d} fill="#7d7d95" stroke="#7d7d95" strokeWidth=".8" /></svg>
          </button>
        ))}
      </div>
      <button className={`${tab} w-[51px] pl-1`}>Model</button>
      <button className={`${tab} w-[59px]`}>3D Views</button>
      <button className={`${tab} w-[90px]`}>Motion Study 1</button>
      <button className={`${tab} flex w-[62px] items-start justify-center gap-1`}>
        <svg width="8" height="8" viewBox="0 0 8 8" fill="none" stroke="#345"><path d="M2 0v6M0 2l5 3M5 1l-2 3h3" /></svg>
        Static 1
      </button>
      <button className="flex w-[105px] shrink-0 items-start justify-center gap-[2px] border-r border-[#999] pr-2 font-bold whitespace-nowrap">
        <StudyIcon color="#333" />
        Design Study 1
      </button>
    </div>
  );
}

/* ---------- windows taskbar ---------- */

function TaskIcon({ name }) {
  switch (name) {
    case "Task view":
      return (
        <svg width="20" height="20" viewBox="0 0 20 20">
          <path d="M1 6h13v13H1z" fill="#2a2a2a" />
          <path d="M6 1h13v13H6z" fill="#eee" opacity=".75" />
        </svg>
      );
    case "WPS Office":
      return (
        <svg width="22" height="22" viewBox="0 0 22 22">
          <rect x="1" y="1" width="20" height="20" rx="3" fill="#d8142f" />
          <path d="M4 8h4l2 7 2.500-7L15 15l3-7" fill="none" stroke="#fff" strokeWidth="2" />
          <circle cx="19" cy="4" r="3.500" fill="#6fc26c" />
        </svg>
      );
    case "File Explorer":
      return (
        <svg width="22" height="20" viewBox="0 0 22 20">
          <path d="M1 2.500Q1 1 2.500 1H8l2 2h9.500Q21 3 21 4.500V17q0 1.500-1.500 1.500h-17Q1 18.500 1 17z" fill="#e0a526" />
          <path d="M1 5.500h20V17q0 1.500-1.500 1.500h-17Q1 18.500 1 17z" fill="#fcd255" />
          <path d="M4 18.500V15q0-1.500 1.500-1.500h11q1.500 0 1.500 1.500v3.500z" fill="#1c83b8" />
        </svg>
      );
    case "Opera":
      return (
        <svg width="22" height="22" viewBox="0 0 22 22" fill="none" stroke="#c52c46" strokeWidth="1.300">
          <circle cx="11" cy="11" r="9.800" />
          <ellipse cx="11" cy="11" rx="4" ry="7.500" />
          <path d="M9 2.500a8.500 8.500 0 0 0 0 17M13 2.500a8.500 8.500 0 0 1 0 17" />
        </svg>
      );
    case "Teams":
      return (
        <svg width="22" height="22" viewBox="0 0 22 22">
          <circle cx="10" cy="4.500" r="3.200" fill="#6f78e8" />
          <circle cx="17" cy="6" r="2.300" fill="#5159c9" />
          <path d="M6 9h9v8q-4 5-9 2z" fill="#6f78e8" />
          <path d="M14 9.500h6V16q-2 4-6 3z" fill="#7c5ee0" />
          <rect x="1" y="9" width="9" height="9" rx="1.500" fill="#3a3fa8" />
          <path d="M3.500 11.500h4M5.500 11.500v5" stroke="#fff" strokeWidth="1.300" />
        </svg>
      );
    case "Microsoft Store":
      return (
        <svg width="22" height="22" viewBox="0 0 22 22">
          <path d="M7 5V2h8v3" fill="none" stroke="#2c86c4" strokeWidth="1.700" />
          <path d="M1 5h20v13q0 3-3 3H4q-3 0-3-3z" fill="#174d79" />
          <path d="M6.500 9h4v4h-4z" fill="#f05a2a" /><path d="M11.500 9h4v4h-4z" fill="#86bf3f" />
          <path d="M6.500 14h4v4h-4z" fill="#35a6e8" /><path d="M11.500 14h4v4h-4z" fill="#fbc02f" />
        </svg>
      );
    case "Xbox":
      return (
        <svg width="22" height="22" viewBox="0 0 22 22">
          <rect x="1" y="1" width="20" height="20" rx="2" fill="#1a7f1e" />
          <circle cx="11" cy="11" r="7.500" fill="#fff" />
          <path d="M6 17q1-5 5-8.500Q15 12 16 17M5.500 5q3 0 5.500 3 2.500-3 5.500-3" fill="none" stroke="#1a7f1e" strokeWidth="2" />
        </svg>
      );
    case "Festo FluidSIM":
      return (
        <svg width="26" height="22" viewBox="0 0 26 22">
          <path d="M5 1l12 1 2 3H3z" fill="#4a1836" />
          <text x="1" y="13" fontSize="7" fontWeight="bold" fill="#5a2bc9">FESTO</text>
          <text x="2" y="20" fontSize="5" fontWeight="bold" fill="#222">FluidSIM</text>
        </svg>
      );
    case "Photoshop":
      return (
        <svg width="20" height="20" viewBox="0 0 20 20">
          <rect x=".5" y=".5" width="19" height="19" rx="2.500" fill="#0d2530" stroke="#6fb8ac" />
          <text x="4" y="14" fontSize="10" fontWeight="bold" fill="#d5f3f2">Ps</text>
        </svg>
      );
    case "Edge":
      return (
        <svg width="22" height="22" viewBox="0 0 22 22">
          <circle cx="11" cy="11" r="10" fill="#1878c9" />
          <path d="M1.500 9C3 2 10 0 15 2c5 2 7 8 5 11-2 2-6 2-6 0 0-1 1-2 0-4-2-4-9-4-12.500 0z" fill="#3fc3a5" />
          <path d="M8.500 11c-1 5 5 8 10.500 5-3 5-9 6-13 2-2.500-3-1-7 2.500-7z" fill="#124f9c" />
          <path d="M10 11q0-3 2.500-3T15 11q-1.500 2 0 3.500 3 .5 5.500-1-4 4-8 2.500-2.500-2-2.500-5z" fill="#fff" />
        </svg>
      );
    case "Monitor":
      return (
        <svg width="22" height="18" viewBox="0 0 22 18">
          <path d="M1 1h20v16H1z" fill="#a5d8f3" />
          <path d="M1 10l3-3 2 2 2-5 3 6 3-3 2 2 2-4 3 5v7H1z" fill="#1976b8" />
          <path d="M1 1h20v4H1z" fill="#2c8fca" opacity=".6" />
        </svg>
      );
    case "OBS Studio":
      return (
        <svg width="24" height="22" viewBox="0 0 24 22">
          <circle cx="11" cy="12" r="9.500" fill="#26262a" />
          <circle cx="11" cy="12" r="7.500" fill="none" stroke="#555" strokeWidth=".8" />
          <path d="M8 6q-1 4 3 6M17 10q-4-1-6 2M10 19q3-3 1-7" fill="none" stroke="#ccc" strokeWidth="1.600" />
          <circle cx="19" cy="5" r="4.500" fill="#f11414" />
        </svg>
      );
    case "Spotify":
      return (
        <svg width="20" height="20" viewBox="0 0 20 20">
          <circle cx="10" cy="10" r="9.700" fill="#23cf5f" />
          <path d="M4 7q6-2 12 1M5 10.500q5-1.500 10 1M5.500 13.500q4.500-1 8 .8" fill="none" stroke="#123" strokeWidth="1.700" strokeLinecap="round" />
        </svg>
      );
    case "Chrome":
      return (
        <svg width="24" height="24" viewBox="0 0 24 24">
          <path d="M11 12 2.500 7A10 10 0 0 1 19.500 7z" fill="#de4033" />
          <path d="M11 12 19.500 7A10 10 0 0 1 11 22z" fill="#f9c72f" />
          <path d="M11 12v10A10 10 0 0 1 2.500 7z" fill="#2f9c4b" />
          <circle cx="11" cy="12" r="5" fill="#fff" /><circle cx="11" cy="12" r="3.900" fill="#3277df" />
          <circle cx="19" cy="5" r="4.800" fill="#4a1f28" />
          <path d="M16 4l5 3M17 7l3-4" stroke="#d9a0a0" />
        </svg>
      );
    default:
      return (
        <svg width="22" height="22" viewBox="0 0 22 22">
          <path d="M1 3.500 13 1l8 2v13l-8 4-12-3z" fill="#a5121e" />
          <path d="M1 3.500 13 1l8 2-6 2z" fill="#cf3a3a" />
          <path d="M9 15.500h12V21H9z" fill="#ddd" />
          <text x="2" y="13" fontSize="9" fontWeight="bold" fill="#fff">SW</text>
          <text x="10" y="20" fontSize="4" fontWeight="bold" fill="#222">2022</text>
        </svg>
      );
  }
}

const taskApps = [
  { name: "Task view" },
  { name: "WPS Office", open: true },
  { name: "File Explorer", open: true },
  { name: "Opera" },
  { name: "Teams" },
  { name: "Microsoft Store" },
  { name: "Xbox" },
  { name: "Festo FluidSIM" },
  { name: "Photoshop" },
  { name: "Edge" },
  { name: "Monitor", open: true },
  { name: "OBS Studio", open: true },
  { name: "Spotify", open: true },
  { name: "Chrome", open: true },
  { name: "SOLIDWORKS", active: true },
];

function Taskbar() {
  return (
    <footer className="flex h-[39px] shrink-0 items-center border-t border-[#cfc8c6] bg-linear-to-r from-[#f6e3e0] via-[#f8e8e5] to-[#f8e8e0]">
      <div className="w-52 shrink-0 pl-4">
        <button aria-label="Weather" className="relative block">
          <svg width="22" height="22" viewBox="0 0 22 22">
            <path d="M5 17a4 4 0 0 1 0-8 6 6 0 0 1 11-1 4.500 4.500 0 0 1 1 9z" fill="#b5d0f3" />
            <path d="M5 17a4 4 0 0 1 0-7q3-1 5 2t10 1q-1 4-4 4z" fill="#dce9fa" />
            <path d="M14.500 14q3 4 2 6t-4 0q-1-2 2-6z" fill="#2b7ed0" />
          </svg>
          <span className="absolute -top-1.5 left-[11px] flex size-[13px] items-center justify-center rounded-full bg-[#b51a26] text-[9px] leading-none text-white">1</span>
        </button>
      </div>
      <div className="flex shrink-0 items-center">
        <button aria-label="Start" className="mr-3">
          <svg width="20" height="20" viewBox="0 0 20 20">
            <path d="M0 0h9.500v9.500H0z" fill="#35b4ea" /><path d="M10.500 0H20v9.500h-9.500z" fill="#26a0e2" />
            <path d="M0 10.500h9.500V20H0z" fill="#1f92dc" /><path d="M10.500 10.500H20V20h-9.500z" fill="#1580cf" />
          </svg>
        </button>
        <div className="flex h-[26px] w-[182px] items-center rounded-full bg-[#fdf8f5] pr-[3px] pl-[9px] shadow-[0_0_1px_#bba]">
          <Search size={13} strokeWidth={2.500} className="text-[#222]" />
          <input aria-label="Search" placeholder="Search" className="ml-2 w-0 flex-1 text-[11px] outline-none placeholder:text-[#666]" />
          <svg width="42" height="22" viewBox="0 0 42 22">
            <defs>
              <linearGradient id="dusk" x1="0" y1="0" x2="0" y2="1">
                <stop offset="0" stopColor="#4a2390" />
                <stop offset=".55" stopColor="#a64fb0" />
                <stop offset=".85" stopColor="#e89a86" />
                <stop offset="1" stopColor="#35284a" />
              </linearGradient>
            </defs>
            <path d="M8 1h10l3-1 4 1h9q6 0 6 7 2 2 2 5 0 8-7 8H7q-7 0-7-8 0-3 2-5 0-7 6-7z" fill="url(#dusk)" />
            <path d="M14 8h2v13h-3zM26 8h2l1 13h-3zM1 18h40v2H1z" fill="#2a2038" />
            <path d="M21 3v5M18.500 5.500h5M9 3v4M7 5h4M34 3v4M32 5h4" stroke="#e3b4ff" strokeWidth=".8" />
          </svg>
        </div>
        <div className="ml-[2px] grid w-[550px] grid-cols-[repeat(15,minmax(0,1fr))]">
          {taskApps.map((app) => (
            <button
              key={app.name}
              aria-label={app.name}
              className={`relative mx-[2px] flex h-8 items-center justify-center rounded ${app.active ? "bg-[#fdf6f4]" : ""}`}
            >
              <TaskIcon name={app.name} />
              {app.open && <span className="absolute -bottom-[1px] h-[2px] w-[5px] rounded-full bg-[#8a7f7d]" />}
              {app.active && <span className="absolute -bottom-[1px] h-[3px] w-[13px] rounded-full bg-[#1f74c0]" />}
            </button>
          ))}
        </div>
      </div>
      <div className="ml-auto flex shrink-0 items-center pr-4 text-[10px] leading-[13px] text-[#222]">
        <button aria-label="Hidden icons"><ChevronUp size={13} strokeWidth={2} /></button>
        <span className="ml-[14px] flex size-[14px] items-center justify-center bg-white text-[#2f7bdc]"><Cloud size={12} strokeWidth={2} /></span>
        <svg width="14" height="14" viewBox="0 0 14 14" className="ml-3">
          <circle cx="7" cy="7" r="6.500" fill="#e2d534" />
          <path d="M7 .5A6.500 6.500 0 0 0 2 11l3-3V4l4-3z" fill="#4faa36" />
          <path d="M7 4v6M4 7h6" stroke="#1f7a26" strokeWidth="2" />
        </svg>
        <span className="ml-[14px] text-center">ENG<br />US</span>
        <Wifi size={15} strokeWidth={2} className="ml-[14px]" />
        <Volume2 size={14} strokeWidth={1.700} className="ml-1" />
        <svg width="14" height="12" viewBox="0 0 14 12" className="ml-[6px]">
          <path d="M1 4h11v7H1z" fill="#222" /><path d="M12.500 6h1.200v3h-1.200z" fill="#222" />
          <path d="M2.500 0 1 4h2L2 7l4-4H4l1-3z" fill="#222" stroke="#f8e8e0" strokeWidth=".6" />
        </svg>
        <span className="ml-[14px] text-right">15:45<br />31/12/2025</span>
      </div>
    </footer>
  );
}

function App() {
  return (
    <div className="flex h-screen min-h-[720px] flex-col overflow-hidden bg-[#f7f7f7] font-['Open_Sans','Noto_Sans',sans-serif] text-[#111]">
      <TitleBar />
      <Ribbon />
      <div className="flex min-h-0 flex-1">
        <ToolStrip />
        <div className="flex min-w-0 flex-1 flex-col">
          <div className="flex min-h-0 flex-1">
            <PropertyPanel />
            <Viewport />
          </div>
          <DesignStudy />
          <BottomTabs />
        </div>
      </div>
      <div className="flex h-[15px] shrink-0 items-center pl-[1px] text-[9px] leading-[14px]">
        <span>SOLIDWORKS Premium 2022 SP5.0</span>
        <span className="mr-[90px] ml-auto">Editing Part</span>
        <span className="text-[#aaa]">MMGS</span>
        <Caret className="ml-4 w-1" color="#888" />
        <svg width="12" height="10" viewBox="0 0 12 10" className="mr-[2px] ml-[17px]">
          <path d="M1 4 5 1l6 3-1 4-3 1.500-5-3z" fill="#ccc" stroke="#555" />
          <path d="M3 4.500l6 2M5 3l4 2" stroke="#777" />
        </svg>
      </div>
      <Taskbar />
    </div>
  );
}

export default App;
